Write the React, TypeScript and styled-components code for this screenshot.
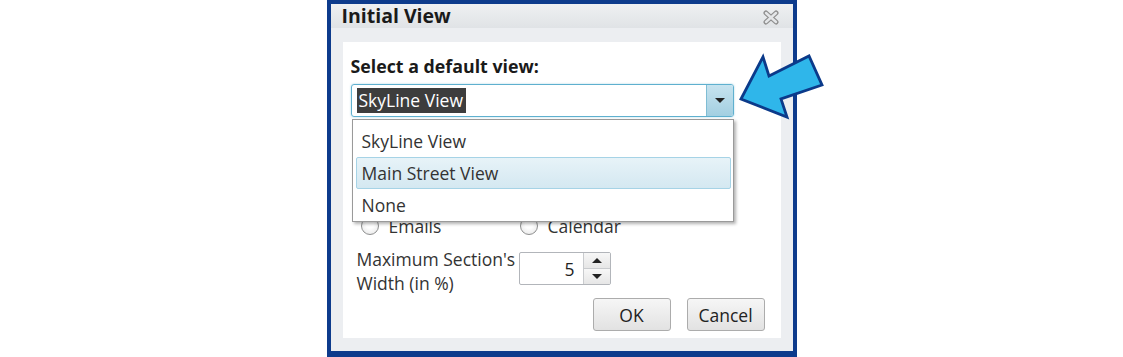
import React from 'react'
import styled, { createGlobalStyle } from 'styled-components'

const GlobalStyle = createGlobalStyle`
	html, body {
		margin: 0;
		padding: 0;
		background: #ffffff;
	}
	body {
		font-family: 'Open Sans', 'Noto Sans', sans-serif;
		color: #333333;
	}
`

const viewOptions = ['SkyLine View', 'Main Street View', 'None']

export default function App() {
	return (
		<Page>
			<GlobalStyle />
			<Window>
				<TitleBar>
					<Title>Initial View</Title>
					<CloseIcon />
				</TitleBar>
				<Body>
					<Panel>
						<Label>Select a default view:</Label>
						<Combo>
							<ComboText>
								<Selection>SkyLine View</Selection>
							</ComboText>
							<ComboButton>
								<Triangle $down />
							</ComboButton>
						</Combo>
						<DropList>
							{viewOptions.map(option => (
								<DropItem key={option} $active={option === 'Main Street View'}>
									{option}
								</DropItem>
							))}
						</DropList>
						<RadioRow>
							<RadioOption $width={159}>
								<RadioCircle />
								Emails
							</RadioOption>
							<RadioOption>
								<RadioCircle />
								Calendar
							</RadioOption>
						</RadioRow>
						<SpinRow>
							<SpinLabel>
								Maximum Section's
								<br />
								Width (in %)
							</SpinLabel>
							<Spinner>
								<SpinValue>5</SpinValue>
								<SpinButtons>
									<SpinButton>
										<Triangle />
									</SpinButton>
									<SpinButton>
										<Triangle $down />
									</SpinButton>
								</SpinButtons>
							</Spinner>
						</SpinRow>
						<ButtonRow>
							<Button>OK</Button>
							<Button>Cancel</Button>
						</ButtonRow>
					</Panel>
				</Body>
			</Window>
			<Pointer />
		</Page>
	)
}

function CloseIcon() {
	return (
		<CloseSvg viewBox="0 0 16 15" width={16} height={15}>
			<path d="M3 3 L13 12 M13 3 L3 12" stroke="#8f8f8f" strokeWidth={5} strokeLinecap="round" fill="none" />
			<path d="M3 3 L13 12 M13 3 L3 12" stroke="#e4e6e8" strokeWidth={2.4} strokeLinecap="round" fill="none" />
		</CloseSvg>
	)
}

function Pointer() {
	return (
		<ArrowSvg viewBox="0 0 95 74" width={95} height={74}>
			<polygon
				points="7,49 29,7 35,26 75,6 88,35 47,49 53,67"
				fill="#2fb6ea"
				stroke="#0b3a8a"
				strokeWidth={2.8}
				strokeLinejoin="miter"
			/>
		</ArrowSvg>
	)
}

const Page = styled.div`
	position: relative;
	width: 1123px;
	height: 357px;
	display: flex;
	justify-content: center;
	overflow: hidden;
`

const Window = styled.div`
	width: 470px;
	height: 357px;
	box-sizing: border-box;
	border: 4px solid #0d3b8c;
	border-bottom-width: 6px;
	background: #e9ebee;
	display: flex;
	flex-direction: column;
`

const TitleBar = styled.div`
	height: 24px;
	padding: 0 14px 0 11px;
	display: flex;
	align-items: center;
	justify-content: space-between;
	background: linear-gradient(#eef0f2, #e0e3e6);
`

const Title = styled.div`
	font-size: 19.5px;
	font-weight: 700;
	line-height: 24px;
	color: #1a1a1a;
`

const CloseSvg = styled.svg`
	display: block;
	margin-top: 3px;
`

const Body = styled.div`
	flex: 1;
	padding: 14px 12px 13px 12px;
	display: flex;
	background: #eceef1;
`

const Panel = styled.div`
	position: relative;
	flex: 1;
	background: #ffffff;
	padding: 13px 0 0 8px;
	display: flex;
	flex-direction: column;
`

const Label = styled.div`
	font-size: 17.8px;
	font-weight: 700;
	line-height: 22px;
	color: #1a1a1a;
`

const Combo = styled.div`
	margin-top: 7px;
	width: 383px;
	height: 33px;
	box-sizing: border-box;
	border: 1px solid #5fb0cf;
	border-radius: 3px;
	box-shadow: 0 0 2px rgba(95, 176, 207, 0.6);
	display: flex;
	overflow: hidden;
`

const ComboText = styled.div`
	flex: 1;
	display: flex;
	align-items: center;
	padding-left: 5px;
`

const Selection = styled.span`
	background: #3d3d3d;
	color: #ffffff;
	font-size: 17.5px;
	line-height: 25px;
	padding: 0 3px 0 2px;
`

const ComboButton = styled.div`
	width: 26px;
	border-left: 1px solid #7fbdd4;
	background: linear-gradient(#c6e3ef, #a3cfe1);
	display: flex;
	align-items: center;
	justify-content: center;
`

const Triangle = styled.div<{ $down?: boolean }>`
	width: 0;
	height: 0;
	border-left: 5px solid transparent;
	border-right: 5px solid transparent;
	${props =>
		props.$down
			? 'border-top: 5px solid #222222;'
			: 'border-bottom: 5px solid #222222;'}
`

const DropList = styled.div`
	position: absolute;
	left: 9px;
	top: 77px;
	width: 382px;
	height: 103px;
	box-sizing: border-box;
	background: #ffffff;
	border: 1px solid #9a9a9a;
	box-shadow: 2px 2px 3px rgba(0, 0, 0, 0.3);
	padding: 5px 2px 0 3px;
	z-index: 2;
`

const DropItem = styled.div<{ $active?: boolean }>`
	height: 32px;
	box-sizing: border-box;
	display: flex;
	align-items: center;
	padding-left: 5px;
	font-size: 17.5px;
	color: #333333;
	border: 1px solid ${props => (props.$active ? '#a6d3e6' : 'transparent')};
	border-radius: 2px;
	background: ${props =>
		props.$active ? 'linear-gradient(#e7f3f8, #d4e8f1)' : 'transparent'};
`

const RadioRow = styled.div`
	margin-top: 99px;
	margin-left: 10px;
	height: 20px;
	display: flex;
	align-items: center;
`

const RadioOption = styled.div<{ $width?: number }>`
	width: ${props => (props.$width ? `${props.$width}px` : 'auto')};
	display: flex;
	align-items: center;
	gap: 10px;
	font-size: 17.5px;
	color: #333333;
`

const RadioCircle = styled.span`
	width: 18px;
	height: 18px;
	box-sizing: border-box;
	border-radius: 50%;
	border: 1px solid #8e8f8f;
	background: radial-gradient(circle at 50% 40%, #ffffff 30%, #e3e3e3 100%);
`

const SpinRow = styled.div`
	margin-top: 11px;
	margin-left: 6px;
	display: flex;
	align-items: flex-start;
`

const SpinLabel = styled.div`
	width: 162px;
	font-size: 17.5px;
	line-height: 24px;
	white-space: nowrap;
	color: #333333;
`

const Spinner = styled.div`
	margin-top: 5px;
	width: 92px;
	height: 33px;
	box-sizing: border-box;
	border: 1px solid #b2b5ba;
	border-radius: 2px;
	display: flex;
	background: #ffffff;
`

const SpinValue = styled.div`
	flex: 1;
	display: flex;
	align-items: center;
	justify-content: flex-end;
	padding-right: 8px;
	font-size: 17.5px;
	color: #222222;
`

const SpinButtons = styled.div`
	width: 26px;
	display: flex;
	flex-direction: column;
	border-left: 1px solid #c9cbce;
`

const SpinButton = styled.div`
	flex: 1;
	display: flex;
	align-items: center;
	justify-content: center;
	background: linear-gradient(#f7f7f7, #e6e6e6);
	& + & {
		border-top: 1px solid #c9cbce;
	}
`

const ButtonRow = styled.div`
	margin-top: 3px;
	padding-right: 16px;
	display: flex;
	justify-content: flex-end;
	gap: 16px;
`

const Button = styled.div`
	width: 78px;
	height: 33px;
	box-sizing: border-box;
	border: 1px solid #acacac;
	border-radius: 3px;
	background: linear-gradient(#f6f6f6, #e2e2e2);
	display: flex;
	align-items: center;
	justify-content: center;
	font-size: 17.5px;
	color: #222222;
`

const ArrowSvg = styled.svg`
	position: absolute;
	left: 734px;
	top: 50px;
	z-index: 3;
`
